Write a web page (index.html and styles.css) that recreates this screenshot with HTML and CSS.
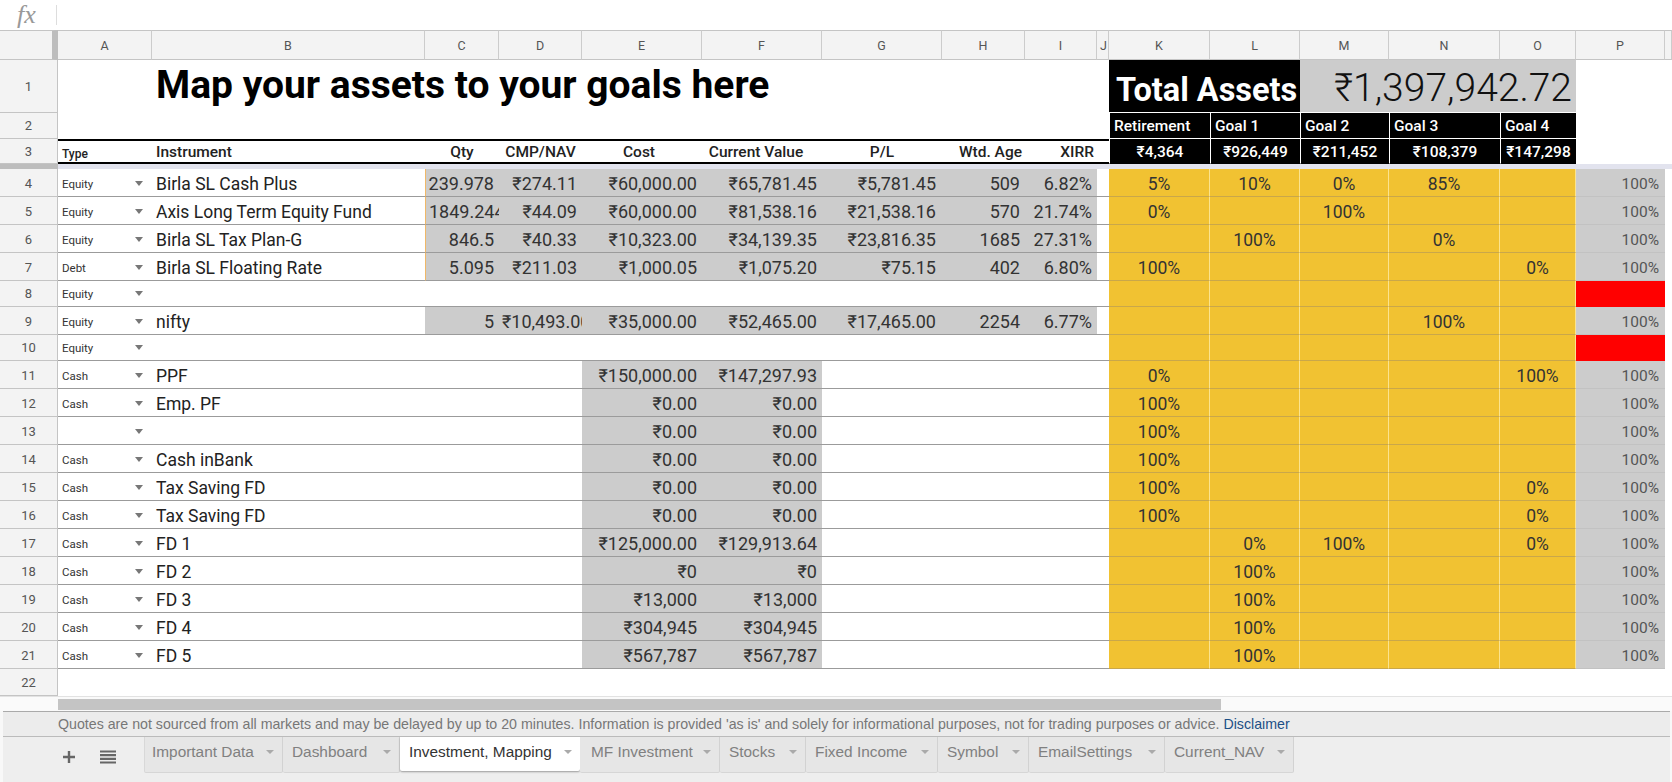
FILE: index.html
```html
<!DOCTYPE html>
<html lang="en">
<head>
<meta charset="utf-8">
<title>Map your assets to your goals</title>
<link rel="stylesheet" href="styles.css">
</head>
<body>
<div class="page">
  <div class="formula"><span class="fx">fx</span><span class="divider"></span></div>
  <div class="grid-wrap">
  <table class="sheet">
    <colgroup>
      <col class="c-rh"><col class="c-a"><col class="c-b"><col class="c-c"><col class="c-d"><col class="c-e"><col class="c-f"><col class="c-g"><col class="c-h"><col class="c-i"><col class="c-j"><col class="c-k"><col class="c-l"><col class="c-m"><col class="c-n"><col class="c-o"><col class="c-p"><col class="c-q">
    </colgroup>
    <tr class="rcol">
      <th class="corner"></th><th>A</th><th>B</th><th>C</th><th>D</th><th>E</th><th>F</th><th>G</th><th>H</th><th>I</th><th>J</th><th>K</th><th>L</th><th>M</th><th>N</th><th>O</th><th>P</th><th></th>
    </tr>
    <tr class="r1">
      <th class="rh">1</th><td class="plain"></td><td class="plain title" colspan="9">Map your assets to your goals here</td>
      <td class="total" colspan="2">Total Assets</td><td class="totalv" colspan="3">₹1,397,942.72</td><td class="plain" colspan="2"></td>
    </tr>
    <tr class="r2">
      <th class="rh">2</th><td class="plain" colspan="10"></td>
      <td class="blk">Retirement</td><td class="blk">Goal 1</td><td class="blk">Goal 2</td><td class="blk">Goal 3</td><td class="blk">Goal 4</td><td class="plain" colspan="2"></td>
    </tr>
    <tr class="r3">
      <th class="rh">3</th><td class="hd hdtype">Type</td><td class="hd hdname">Instrument</td><td class="hd ctr">Qty</td><td class="hd ctr">CMP/NAV</td><td class="hd ctr hdcost">Cost</td><td class="hd ctr hdcur">Current Value</td><td class="hd ctr">P/L</td><td class="hd rgt">Wtd. Age</td><td class="hd rgt">XIRR</td><td class="hd"></td>
      <td class="blk ctr">₹4,364</td><td class="blk ctr">₹926,449</td><td class="blk ctr">₹211,452</td><td class="blk ctr">₹108,379</td><td class="blk ctr">₹147,298</td><td class="plain" colspan="2"></td>
    </tr>
    <tr class="rfz"><th class="fzh"></th><td class="fz" colspan="17"></td></tr>
    <tr class="r28">
      <th class="rh">4</th><td><div class="ty"><span>Equity</span><i class="arr"></i></div></td><td class="nm">Birla SL Cash Plus</td><td class="g num edge">239.978</td><td class="g num">₹274.11</td><td class="g num">₹60,000.00</td><td class="g num">₹65,781.45</td><td class="g num pl">₹5,781.45</td><td class="g num">509</td><td class="g num">6.82%</td><td></td>
      <td class="y">5%</td><td class="y">10%</td><td class="y">0%</td><td class="y">85%</td><td class="y"></td><td class="p">100%</td><td class="q"></td>
    </tr>
    <tr class="r28">
      <th class="rh">5</th><td><div class="ty"><span>Equity</span><i class="arr"></i></div></td><td class="nm">Axis Long Term Equity Fund</td><td class="g clip edge">1849.244</td><td class="g num">₹44.09</td><td class="g num">₹60,000.00</td><td class="g num">₹81,538.16</td><td class="g num pl">₹21,538.16</td><td class="g num">570</td><td class="g num">21.74%</td><td></td>
      <td class="y">0%</td><td class="y"></td><td class="y">100%</td><td class="y"></td><td class="y"></td><td class="p">100%</td><td class="q"></td>
    </tr>
    <tr class="r28">
      <th class="rh">6</th><td><div class="ty"><span>Equity</span><i class="arr"></i></div></td><td class="nm">Birla SL Tax Plan-G</td><td class="g num edge">846.5</td><td class="g num">₹40.33</td><td class="g num">₹10,323.00</td><td class="g num">₹34,139.35</td><td class="g num pl">₹23,816.35</td><td class="g num">1685</td><td class="g num">27.31%</td><td></td>
      <td class="y"></td><td class="y">100%</td><td class="y"></td><td class="y">0%</td><td class="y"></td><td class="p">100%</td><td class="q"></td>
    </tr>
    <tr class="r28">
      <th class="rh">7</th><td><div class="ty"><span>Debt</span><i class="arr"></i></div></td><td class="nm">Birla SL Floating Rate</td><td class="g num edge">5.095</td><td class="g num">₹211.03</td><td class="g num">₹1,000.05</td><td class="g num">₹1,075.20</td><td class="g num pl">₹75.15</td><td class="g num">402</td><td class="g num">6.80%</td><td></td>
      <td class="y">100%</td><td class="y"></td><td class="y"></td><td class="y"></td><td class="y">0%</td><td class="p">100%</td><td class="q"></td>
    </tr>
    <tr class="r26">
      <th class="rh">8</th><td><div class="ty"><span>Equity</span><i class="arr"></i></div></td><td colspan="9"></td>
      <td class="y"></td><td class="y"></td><td class="y"></td><td class="y"></td><td class="y"></td><td class="red"></td><td class="q"></td>
    </tr>
    <tr class="r28">
      <th class="rh">9</th><td><div class="ty"><span>Equity</span><i class="arr"></i></div></td><td class="nm">nifty</td><td class="g num">5</td><td class="g clip">₹10,493.00</td><td class="g num">₹35,000.00</td><td class="g num">₹52,465.00</td><td class="g num pl">₹17,465.00</td><td class="g num">2254</td><td class="g num">6.77%</td><td></td>
      <td class="y"></td><td class="y"></td><td class="y"></td><td class="y">100%</td><td class="y"></td><td class="p">100%</td><td class="q"></td>
    </tr>
    <tr class="r26">
      <th class="rh">10</th><td><div class="ty"><span>Equity</span><i class="arr"></i></div></td><td colspan="9"></td>
      <td class="y"></td><td class="y"></td><td class="y"></td><td class="y"></td><td class="y"></td><td class="red"></td><td class="q"></td>
    </tr>
    <tr class="r28">
      <th class="rh">11</th><td><div class="ty"><span>Cash</span><i class="arr"></i></div></td><td class="nm">PPF</td><td colspan="2"></td><td class="g num">₹150,000.00</td><td class="g num">₹147,297.93</td><td colspan="4"></td>
      <td class="y">0%</td><td class="y"></td><td class="y"></td><td class="y"></td><td class="y">100%</td><td class="p">100%</td><td class="q"></td>
    </tr>
    <tr class="r28">
      <th class="rh">12</th><td><div class="ty"><span>Cash</span><i class="arr"></i></div></td><td class="nm">Emp. PF</td><td colspan="2"></td><td class="g num">₹0.00</td><td class="g num">₹0.00</td><td colspan="4"></td>
      <td class="y">100%</td><td class="y"></td><td class="y"></td><td class="y"></td><td class="y"></td><td class="p">100%</td><td class="q"></td>
    </tr>
    <tr class="r28">
      <th class="rh">13</th><td><div class="ty"><span></span><i class="arr"></i></div></td><td class="nm"></td><td colspan="2"></td><td class="g num">₹0.00</td><td class="g num">₹0.00</td><td colspan="4"></td>
      <td class="y">100%</td><td class="y"></td><td class="y"></td><td class="y"></td><td class="y"></td><td class="p">100%</td><td class="q"></td>
    </tr>
    <tr class="r28">
      <th class="rh">14</th><td><div class="ty"><span>Cash</span><i class="arr"></i></div></td><td class="nm">Cash inBank</td><td colspan="2"></td><td class="g num">₹0.00</td><td class="g num">₹0.00</td><td colspan="4"></td>
      <td class="y">100%</td><td class="y"></td><td class="y"></td><td class="y"></td><td class="y"></td><td class="p">100%</td><td class="q"></td>
    </tr>
    <tr class="r28">
      <th class="rh">15</th><td><div class="ty"><span>Cash</span><i class="arr"></i></div></td><td class="nm">Tax Saving FD</td><td colspan="2"></td><td class="g num">₹0.00</td><td class="g num">₹0.00</td><td colspan="4"></td>
      <td class="y">100%</td><td class="y"></td><td class="y"></td><td class="y"></td><td class="y">0%</td><td class="p">100%</td><td class="q"></td>
    </tr>
    <tr class="r28">
      <th class="rh">16</th><td><div class="ty"><span>Cash</span><i class="arr"></i></div></td><td class="nm">Tax Saving FD</td><td colspan="2"></td><td class="g num">₹0.00</td><td class="g num">₹0.00</td><td colspan="4"></td>
      <td class="y">100%</td><td class="y"></td><td class="y"></td><td class="y"></td><td class="y">0%</td><td class="p">100%</td><td class="q"></td>
    </tr>
    <tr class="r28">
      <th class="rh">17</th><td><div class="ty"><span>Cash</span><i class="arr"></i></div></td><td class="nm">FD 1</td><td colspan="2"></td><td class="g num">₹125,000.00</td><td class="g num">₹129,913.64</td><td colspan="4"></td>
      <td class="y"></td><td class="y">0%</td><td class="y">100%</td><td class="y"></td><td class="y">0%</td><td class="p">100%</td><td class="q"></td>
    </tr>
    <tr class="r28">
      <th class="rh">18</th><td><div class="ty"><span>Cash</span><i class="arr"></i></div></td><td class="nm">FD 2</td><td colspan="2"></td><td class="g num">₹0</td><td class="g num">₹0</td><td colspan="4"></td>
      <td class="y"></td><td class="y">100%</td><td class="y"></td><td class="y"></td><td class="y"></td><td class="p">100%</td><td class="q"></td>
    </tr>
    <tr class="r28">
      <th class="rh">19</th><td><div class="ty"><span>Cash</span><i class="arr"></i></div></td><td class="nm">FD 3</td><td colspan="2"></td><td class="g num">₹13,000</td><td class="g num">₹13,000</td><td colspan="4"></td>
      <td class="y"></td><td class="y">100%</td><td class="y"></td><td class="y"></td><td class="y"></td><td class="p">100%</td><td class="q"></td>
    </tr>
    <tr class="r28">
      <th class="rh">20</th><td><div class="ty"><span>Cash</span><i class="arr"></i></div></td><td class="nm">FD 4</td><td colspan="2"></td><td class="g num">₹304,945</td><td class="g num">₹304,945</td><td colspan="4"></td>
      <td class="y"></td><td class="y">100%</td><td class="y"></td><td class="y"></td><td class="y"></td><td class="p">100%</td><td class="q"></td>
    </tr>
    <tr class="r28">
      <th class="rh">21</th><td><div class="ty"><span>Cash</span><i class="arr"></i></div></td><td class="nm">FD 5</td><td colspan="2"></td><td class="g num">₹567,787</td><td class="g num">₹567,787</td><td colspan="4"></td>
      <td class="y"></td><td class="y">100%</td><td class="y"></td><td class="y"></td><td class="y"></td><td class="p">100%</td><td class="q"></td>
    </tr>
    <tr class="r22">
      <th class="rh">22</th><td class="plain" colspan="17"></td>
    </tr>
  </table>
  </div>
  <div class="scrollbar"><div class="scroll-gutter"></div><div class="thumb"></div></div>
  <div class="notice">Quotes are not sourced from all markets and may be delayed by up to 20 minutes. Information is provided 'as is' and solely for informational purposes, not for trading purposes or advice. <span class="link">Disclaimer</span></div>
  <div class="tabbar">
    <div class="tools">
      <svg class="ico" viewBox="0 0 14 14" aria-hidden="true"><path d="M7 1v12M1 7h12"/></svg>
      <svg class="ico menu" viewBox="0 0 16 14" aria-hidden="true"><path d="M0 1.5h16M0 5.2h16M0 8.8h16M0 12.5h16"/></svg>
    </div>
    <div class="tab t1"><span>Important Data</span><i class="tarr"></i></div>
    <div class="tab t2"><span>Dashboard</span><i class="tarr"></i></div>
    <div class="tab t3 active"><span>Investment, Mapping</span><i class="tarr"></i></div>
    <div class="tab t4"><span>MF Investment</span><i class="tarr"></i></div>
    <div class="tab t5"><span>Stocks</span><i class="tarr"></i></div>
    <div class="tab t6"><span>Fixed Income</span><i class="tarr"></i></div>
    <div class="tab t7"><span>Symbol</span><i class="tarr"></i></div>
    <div class="tab t8"><span>EmailSettings</span><i class="tarr"></i></div>
    <div class="tab t9"><span>Current_NAV</span><i class="tarr"></i></div>
  </div>
</div>
</body>
</html>
```
FILE: styles.css
```css
* { box-sizing: border-box; }
html, body { margin: 0; padding: 0; height: 100%; background: #f8f8f8; overflow: hidden; }
body { font-family: Roboto, "Liberation Sans", sans-serif; color: #222; }
.page { display: flex; flex-direction: column; width: 1672px; height: 782px; }

.formula { height: 30px; background: #fff; display: flex; align-items: center; flex: none; }
.fx { font-family: "Liberation Serif", serif; font-style: italic; font-size: 26px; color: #999; width: 56px; padding-left: 17px; line-height: 26px; }
.divider { width: 1px; height: 20px; background: #ddd; }

.grid-wrap { height: 666px; flex: none; overflow: hidden; background: #fff; }
.sheet { table-layout: fixed; border-collapse: separate; border-spacing: 0; width: 1672px; }
.c-rh { width: 58px; } .c-a { width: 94px; } .c-b { width: 273px; } .c-c { width: 74px; } .c-d { width: 83px; }
.c-e { width: 120px; } .c-f { width: 120px; } .c-g { width: 120px; } .c-h { width: 83px; } .c-i { width: 72px; }
.c-j { width: 12px; } .c-k { width: 101px; } .c-l { width: 90px; } .c-m { width: 89px; } .c-n { width: 111px; }
.c-o { width: 76px; } .c-p { width: 89px; } .c-q { width: 7px; }

.sheet td, .sheet th { padding: 0 3px; overflow: hidden; white-space: nowrap; border-bottom: 1px solid #9b9b9b; font-weight: 400; }
.sheet td { font-size: 17.5px; }

.rcol { height: 30px; }
.rcol th { background: #f3f3f3; font-size: 12.5px; color: #555; border-right: 1px solid #ccc; border-top: 1px solid #c4c4c4; border-bottom: 1px solid #c4c4c4; }
.rcol .corner { border-right: 6px solid #bdbdbd; }
.rh { background: #f3f3f3; font-size: 13px; color: #555; border-right: 1px solid #c4c4c4; border-bottom-color: #c4c4c4 !important; }

.r1 { height: 53px; } .r2 { height: 26px; } .r3 { height: 25px; }
.r28 { height: 28px; } .r26 { height: 26px; } .r22 { height: 27px; }
.rfz { height: 5px; }
.rfz th, .rfz td { padding: 0; border-bottom: 0; font-size: 0; height: 5px; }
.fzh { background: #bdbdbd; }
.fz { background: #e2e3ee; }

.sheet .plain { border-bottom: 0; }
.sheet .title { font-size: 39px; font-weight: 700; color: #000; padding: 0 0 4px 4px; vertical-align: middle; }
.sheet .total { background: #000; color: #fff; font-size: 32.5px; font-weight: 700; padding: 8px 0 0 7px; border-bottom: 1px solid #fff; }
.sheet .totalv { background: #ccc; color: #111; font-size: 39px; font-weight: 300; text-align: right; padding: 3px 4px 0 0; border-bottom: 1px solid #fff; }
.sheet .blk { background: #000; color: #fff; font-size: 15.5px; font-weight: 500; border-left: 1px solid #fff; border-bottom: 1px solid #fff; padding: 1px 4px 0; }
.r3 .blk { border-bottom: 1px solid #000; }
.sheet .blk.ctr { text-align: center; padding: 1px 0 0; }

.sheet .hd { font-size: 15.5px; font-weight: 500; border-top: 2px solid #000; border-bottom: 2px solid #000; color: #222; }
.sheet .hdtype { font-size: 12px; padding: 4px 0 0 4px; }
.sheet .hdname { padding-left: 4px; }
.sheet .ctr { text-align: center; }
.sheet .rgt { text-align: right; }
.sheet .hdcost { padding-right: 9px; }
.sheet .hdcur { padding-right: 15px; }

.sheet .nm { padding-left: 4px; color: #222; }
.ty { display: flex; justify-content: space-between; align-items: center; font-size: 11.5px; color: #333; padding: 0 6px 0 1px; }
.arr { width: 0; height: 0; border-left: 4px solid transparent; border-right: 4px solid transparent; border-top: 5px solid #777; }

.sheet .g { background: #ccc; color: #333; font-size: 18px; }
.sheet .num { text-align: right; padding: 0 5px 0 0; }
.sheet .pl { padding-right: 6px; }
.sheet .clip { text-align: left; padding: 0 0 0 3px; }
.sheet .edge { border-left: 1px solid #f0b868; }
.sheet .y { background: #f1c232; text-align: center; color: #333; border-right: 1px solid #fbe38f; border-bottom: 1px solid #c9a74a; }
.sheet .p { background: #ccc; text-align: right; color: #555; font-size: 15.5px; padding-right: 6px; border-bottom: 1px solid #c2c2c2; }
.sheet .red { background: #f00; border-bottom: 1px solid #f00; }
.sheet .q { border-bottom: 0; background: #fff; }
.sheet .r28 td, .sheet .r28 th { padding-top: 2px; }

.scrollbar { height: 15px; flex: none; display: flex; background: #fafafa; border-top: 1px solid #e2e2e2; padding: 2px 0 1px; }
.scroll-gutter { width: 58px; }
.thumb { width: 1163px; background: #c4c4c4; }

.notice { height: 26px; flex: none; margin: 0 2px 0 3px; background: #ececec; border-top: 1px solid #aaa; border-bottom: 1px solid #bbb; font-family: "Liberation Sans", Arial, sans-serif; font-size: 14.2px; color: #777; padding-left: 55px; line-height: 24px; white-space: nowrap; }
.link { color: #1c4f86; }

.tabbar { display: flex; align-items: flex-start; flex: 1; margin: 0 2px 0 3px; background: #eee; font-family: "Liberation Sans", Arial, sans-serif; font-size: 15.4px; color: #808080; }
.tools { width: 141px; display: flex; align-items: center; padding: 13px 0 0 59px; gap: 24px; }
.ico { width: 14px; height: 14px; fill: none; stroke: #666; stroke-width: 2.4; flex: none; }
.ico.menu { width: 16px; stroke-width: 2.2; }
.tab { display: flex; height: 36px; align-items: center; justify-content: space-between; padding: 0 8px 5px 9px; background: #e6e6e6; border-right: 1px solid #d2d2d2; border-bottom: 1px solid #d6d6d6; border-radius: 0 0 2px 2px; }
.tab.active { background: #fff; color: #333; box-shadow: 0 1px 2px #9a9a9a; height: 34px; border: 0; }
.tarr { width: 0; height: 0; border-left: 4px solid transparent; border-right: 4px solid transparent; border-top: 4px solid #aaa; }
.t1 { width: 139px; padding-left: 7px; border-left: 1px solid #d8d8d8; } .t2 { width: 117px; } .t3 { width: 180px; } .t4 { width: 140px; padding-left: 11px; } .t5 { width: 86px; }
.t6 { width: 132px; } .t7 { width: 91px; } .t8 { width: 136px; } .t9 { width: 129px; }
```
